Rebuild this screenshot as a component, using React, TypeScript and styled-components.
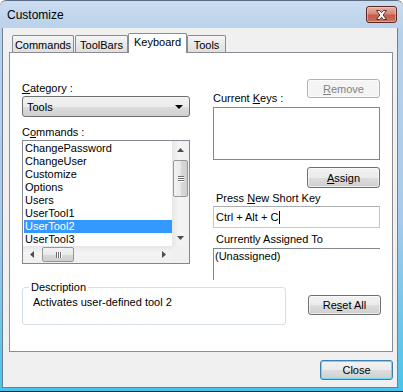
import styled, { createGlobalStyle } from 'styled-components';

const GlobalStyle = createGlobalStyle`
  html, body { margin: 0; padding: 0; background: #ffffff; }
  body { font-family: "Liberation Sans", Arial, sans-serif; font-size: 11px; color: #000; }
  * { box-sizing: border-box; }
`;

const Window = styled.div`
  width: 403px;
  height: 392px;
  display: flex;
  flex-direction: column;
  border-top: 1px solid #5a6c82;
  border-bottom: 1px solid #1b2733;
  border-radius: 6px 6px 0 0;
  background: linear-gradient(to bottom, #cbddf0 0px, #b9d1ea 28px, #a9cbeb 55%, #49c3ea 100%);
`;

const TitleBar = styled.div`
  height: 27px;
  display: flex;
  align-items: center;
  padding-left: 7px;
`;

const Title = styled.span`
  font-size: 12px;
  color: #000;
`;

const CloseBox = styled.div`
  margin-left: auto;
  margin-right: 6px;
  align-self: flex-start;
  margin-top: 5px;
  width: 31px;
  height: 17px;
  border: 1px solid #5b2a24;
  border-radius: 3px;
  background: linear-gradient(to bottom, #e8b1a8 0%, #d88576 45%, #c75a48 55%, #c9705d 100%);
  box-shadow: inset 0 0 0 1px rgba(255, 220, 210, 0.45);
  display: flex;
  align-items: center;
  justify-content: center;
`;

const Client = styled.div`
  flex: 1;
  margin: 0 5px 3px 2px;
  background: #f0f0f0;
  border: 1px solid #6c7f94;
  border-top: none;
  display: flex;
  flex-direction: column;
`;

const TabStrip = styled.div`
  height: 24px;
  display: flex;
  align-items: flex-end;
  padding-left: 9px;
`;

const Tab = styled.div<{ $w: number; $active?: boolean; $gap?: number }>`
  position: relative;
  z-index: ${(p) => (p.$active ? 2 : 1)};
  width: ${(p) => p.$w}px;
  height: ${(p) => (p.$active ? 20 : 17)}px;
  margin-left: ${(p) => p.$gap ?? 0}px;
  margin-bottom: ${(p) => (p.$active ? -1 : 0)}px;
  border: 1px solid #898c95;
  border-bottom: none;
  border-radius: 2px 2px 0 0;
  background: ${(p) => (p.$active ? '#ffffff' : 'linear-gradient(to bottom, #f6f6f6 0%, #e9e9e9 50%, #dfdfdf 100%)')};
  text-align: center;
  line-height: 13px;
  padding-top: ${(p) => (p.$active ? 2 : 3)}px;
`;

const Panel = styled.div`
  height: 300px;
  margin: 0 4px 0 6px;
  border: 1px solid #898c95;
  background: #ffffff;
  padding: 26px 11px 0 12px;
  display: flex;
  flex-direction: column;
`;

const Columns = styled.div`
  display: grid;
  grid-template-columns: 168px 167px;
  column-gap: 23px;
`;

const Column = styled.div`
  display: flex;
  flex-direction: column;
`;

const Label = styled.div<{ $mt?: number; $indent?: number }>`
  line-height: 13px;
  height: 13px;
  margin-top: ${(p) => p.$mt ?? 0}px;
  padding-left: ${(p) => p.$indent ?? 0}px;
  white-space: nowrap;
`;

const Combo = styled.div`
  margin-top: 1px;
  height: 21px;
  border: 1px solid #707070;
  border-radius: 3px;
  background: linear-gradient(to bottom, #f2f2f2 0%, #ebebeb 50%, #dddddd 51%, #cfcfcf 100%);
  display: flex;
  align-items: center;
  padding: 0 6px 0 4px;
  justify-content: space-between;
`;

const ListBox = styled.div`
  margin-top: 1px;
  height: 124px;
  border: 1px solid #828790;
  display: grid;
  grid-template-columns: 1fr 17px;
  grid-template-rows: 1fr 17px;
  overflow: hidden;
`;

const Items = styled.div`
  overflow: hidden;
  padding: 1px 0 0 1px;
`;

const Item = styled.div<{ $selected?: boolean }>`
  height: 13px;
  line-height: 13px;
  padding-left: 1px;
  white-space: nowrap;
  background: ${(p) => (p.$selected ? '#3399ff' : 'transparent')};
  color: ${(p) => (p.$selected ? '#ffffff' : '#000000')};
`;

const VScroll = styled.div`
  display: flex;
  flex-direction: column;
  align-items: center;
  background: linear-gradient(to right, #e6e6e6, #f4f4f4 40%, #f0f0f0);
`;

const HScroll = styled.div`
  display: flex;
  align-items: center;
  background: linear-gradient(to bottom, #e6e6e6, #f4f4f4 40%, #f0f0f0);
`;

const Corner = styled.div`
  background: #f0f0f0;
`;

const ArrowCell = styled.div`
  width: 17px;
  height: 17px;
  flex: none;
  display: flex;
  align-items: center;
  justify-content: center;
`;

const VThumb = styled.div`
  width: 15px;
  height: 37px;
  margin-top: 2px;
  border: 1px solid #979797;
  border-radius: 2px;
  background: linear-gradient(to right, #f3f3f3 0%, #e9e9e9 50%, #d8d8d8 55%, #cfcfcf 100%);
  display: flex;
  flex-direction: column;
  align-items: center;
  justify-content: center;
  gap: 1px;
`;

const HThumb = styled.div`
  width: 32px;
  height: 15px;
  margin-left: 2px;
  border: 1px solid #979797;
  border-radius: 2px;
  background: linear-gradient(to bottom, #f3f3f3 0%, #e9e9e9 50%, #d8d8d8 55%, #cfcfcf 100%);
  display: flex;
  align-items: center;
  justify-content: center;
  gap: 1px;
`;

const Grip = styled.span<{ $vertical?: boolean }>`
  display: block;
  width: ${(p) => (p.$vertical ? 6 : 1)}px;
  height: ${(p) => (p.$vertical ? 1 : 6)}px;
  background: #6e6e6e;
  box-shadow: ${(p) => (p.$vertical ? '0 1px 0 #ffffff' : '1px 0 0 #ffffff')};
`;

const Spacer = styled.div`
  flex: 1;
`;

const Button = styled.div<{ $disabled?: boolean; $default?: boolean; $h?: number; $mt?: number }>`
  width: 73px;
  height: ${(p) => p.$h ?? 20}px;
  margin-top: ${(p) => p.$mt ?? 0}px;
  align-self: flex-end;
  border: 1px solid ${(p) => (p.$disabled ? '#adb2b5' : p.$default ? '#3c7fb1' : '#707070')};
  border-radius: 3px;
  background: ${(p) =>
    p.$disabled ? '#f4f4f4' : 'linear-gradient(to bottom, #f2f2f2 0%, #ebebeb 50%, #dddddd 51%, #cfcfcf 100%)'};
  box-shadow: ${(p) => (p.$default ? 'inset 0 0 0 1px #6fd6f7' : 'inset 0 0 0 1px rgba(255,255,255,0.6)')};
  color: ${(p) => (p.$disabled ? '#838383' : '#000000')};
  display: flex;
  align-items: center;
  justify-content: center;
`;

const ResetButton = styled(Button)`
  align-self: flex-start;
`;

const Box = styled.div<{ $h: number; $mt?: number }>`
  height: ${(p) => p.$h}px;
  margin-top: ${(p) => p.$mt ?? 0}px;
  border: 1px solid #828790;
  background: #ffffff;
`;

const TextBox = styled.div`
  margin-top: 1px;
  height: 22px;
  border: 1px solid #c4c8ce;
  border-top-color: #abadb3;
  display: flex;
  align-items: center;
  padding-left: 2px;
  white-space: nowrap;
`;

const Caret = styled.span`
  display: inline-block;
  width: 1px;
  height: 13px;
  background: #000;
  margin-left: 1px;
`;

const ClippedBox = styled.div`
  margin-top: 2px;
  height: 32px;
  border-top: 1px solid #828790;
  border-left: 1px solid #828790;
  padding: 1px 0 0 1px;
  line-height: 13px;
`;

const BottomRow = styled.div`
  display: flex;
  justify-content: space-between;
  align-items: flex-start;
  margin-top: 1px;
`;

const Group = styled.fieldset`
  width: 264px;
  height: 44px;
  margin: 0;
  padding: 0 0 0 10px;
  border: 1px solid #d5dfe5;
  border-radius: 3px;
`;

const Legend = styled.legend`
  padding: 0 2px;
  margin-left: -4px;
  line-height: 13px;
`;

const GroupText = styled.div`
  line-height: 13px;
  margin-top: 2px;
`;

const Footer = styled.div`
  display: flex;
  justify-content: flex-end;
  padding: 8px 4px 0 0;
`;

const Tri = ({ dir, size = 5 }: { dir: 'up' | 'down' | 'left' | 'right'; size?: number }) => {
  const pts = {
    up: '0,4 7,4 3.5,0',
    down: '0,0 7,0 3.5,4',
    left: '4,0 4,7 0,3.5',
    right: '0,0 0,7 4,3.5',
  }[dir];
  const vertical = dir === 'up' || dir === 'down';
  return (
    <svg width={vertical ? size + 2 : size - 1} height={vertical ? size - 1 : size + 2} viewBox={vertical ? '0 0 7 4' : '0 0 4 7'}>
      <polygon points={pts} fill="#4d4d4d" />
    </svg>
  );
};

const commands = ['ChangePassword', 'ChangeUser', 'Customize', 'Options', 'Users', 'UserTool1', 'UserTool2', 'UserTool3'];

export default function App() {
  return (
    <>
      <GlobalStyle />
      <Window>
        <TitleBar>
          <Title>Customize</Title>
          <CloseBox>
            <svg width="13" height="10" viewBox="0 0 13 10">
              <path
                d="M1.5,0.5 h3 l2,2.2 l2,-2.2 h3 l-3.4,4.5 l3.4,4.5 h-3 l-2,-2.2 l-2,2.2 h-3 l3.4,-4.5 z"
                fill="#ffffff"
                stroke="#4a2520"
                strokeWidth="0.9"
              />
            </svg>
          </CloseBox>
        </TitleBar>
        <Client>
          <TabStrip>
            <Tab $w={62}>Commands</Tab>
            <Tab $w={53} $gap={1}>ToolBars</Tab>
            <Tab $w={59} $active>Keyboard</Tab>
            <Tab $w={39}>Tools</Tab>
          </TabStrip>
          <Panel>
            <Columns>
              <Column>
                <Label $mt={3}>
                  <u>C</u>ategory :
                </Label>
                <Combo>
                  <span>Tools</span>
                  <svg width="8" height="4" viewBox="0 0 8 4">
                    <polygon points="0,0 8,0 4,4" fill="#000" />
                  </svg>
                </Combo>
                <Label $mt={9}>
                  C<u>o</u>mmands :
                </Label>
                <ListBox>
                  <Items>
                    {commands.map((c) => (
                      <Item key={c} $selected={c === 'UserTool2'}>
                        {c}
                      </Item>
                    ))}
                  </Items>
                  <VScroll>
                    <ArrowCell>
                      <Tri dir="up" />
                    </ArrowCell>
                    <VThumb>
                      <Grip $vertical />
                      <Grip $vertical />
                      <Grip $vertical />
                    </VThumb>
                    <Spacer />
                    <ArrowCell>
                      <Tri dir="down" />
                    </ArrowCell>
                  </VScroll>
                  <HScroll>
                    <ArrowCell>
                      <Tri dir="left" />
                    </ArrowCell>
                    <HThumb>
                      <Grip />
                      <Grip />
                      <Grip />
                    </HThumb>
                    <Spacer />
                    <ArrowCell>
                      <Tri dir="right" />
                    </ArrowCell>
                  </HScroll>
                  <Corner />
                </ListBox>
              </Column>
              <Column>
                <Button $disabled $h={19}>
                  <span>
                    <u>R</u>emove
                  </span>
                </Button>
                <Label $mt={-6}>
                  Current <u>K</u>eys :
                </Label>
                <Box $h={53} $mt={2} />
                <Button $h={21} $mt={7}>
                  <span>
                    <u>A</u>ssign
                  </span>
                </Button>
                <Label $mt={4} $indent={3}>
                  Press <u>N</u>ew Short Key
                </Label>
                <TextBox>
                  Ctrl + Alt + C<Caret />
                </TextBox>
                <Label $mt={5} $indent={3}>
                  Currently Assigned To
                </Label>
                <ClippedBox>(Unassigned)</ClippedBox>
              </Column>
            </Columns>
            <BottomRow>
              <Group>
                <Legend>Description</Legend>
                <GroupText>Activates user-defined tool 2</GroupText>
              </Group>
              <ResetButton $mt={14}>
                <span>
                  Re<u>s</u>et All
                </span>
              </ResetButton>
            </BottomRow>
          </Panel>
          <Footer>
            <Button $default>Close</Button>
          </Footer>
        </Client>
      </Window>
    </>
  );
}
